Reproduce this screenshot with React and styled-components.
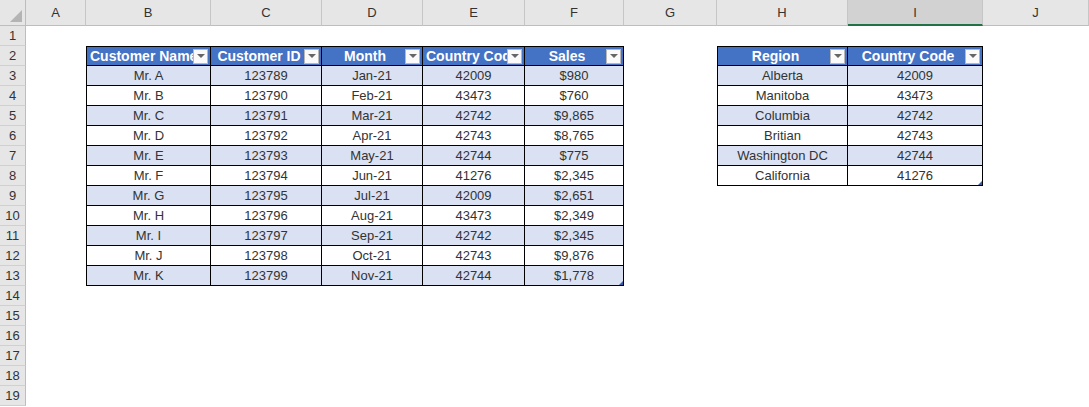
import React from "react";
import styled, { createGlobalStyle, css } from "styled-components";

const Global = createGlobalStyle`
  html, body { margin: 0; padding: 0; background: #fff; }
  body { font-family: "Liberation Sans", Arial, sans-serif; }
`;

const COLS = [26, 60, 125, 111, 101, 102, 99, 93, 131, 135, 106];
const LETTERS = ["A", "B", "C", "D", "E", "F", "G", "H", "I", "J"];

const Sheet = styled.div`
  display: grid;
  grid-template-columns: ${COLS.map((c) => c + "px").join(" ")};
  grid-template-rows: 26px repeat(19, 20px);
  width: 1089px;
  height: 407px;
  overflow: hidden;
  font-size: 13px;
  color: #333;
`;

const ColHead = styled.div`
  background: ${(p) => (p.$sel ? "#d2d2d2" : "#e6e6e6")};
  border-right: 1px solid #c6c6c6;
  border-bottom: ${(p) => (p.$sel ? "2px solid #217346" : "1px solid #bdbdbd")};
  display: flex;
  align-items: center;
  justify-content: center;
  font-size: 13px;
  color: #333;
  box-sizing: border-box;
`;

const Corner = styled.div`
  background: #e6e6e6;
  border-right: 1px solid #bdbdbd;
  border-bottom: 1px solid #bdbdbd;
  position: relative;
  &::after {
    content: "";
    position: absolute;
    right: 3px;
    bottom: 3px;
    border-left: 12px solid transparent;
    border-bottom: 12px solid #b4b4b4;
  }
`;

const RowHead = styled.div`
  background: #e6e6e6;
  border-right: 1px solid #bdbdbd;
  border-bottom: 1px solid #d0d0d0;
  display: flex;
  align-items: center;
  justify-content: center;
  font-size: 13px;
  color: #333;
  box-sizing: border-box;
`;

const Empty = styled.div``;

const Cell = styled.div`
  box-sizing: border-box;
  border-right: 1px solid #000;
  border-bottom: 1px solid #000;
  ${(p) => p.$first && css`border-left: 1px solid #000;`}
  background: ${(p) => (p.$band ? "#d9e1f2" : "#fff")};
  display: flex;
  align-items: center;
  justify-content: center;
  white-space: nowrap;
  position: relative;
  ${(p) =>
    p.$corner &&
    css`
      &::after {
        content: "";
        position: absolute;
        right: 0;
        bottom: 0;
        border-left: 4px solid transparent;
        border-bottom: 4px solid #3a5ba8;
      }
    `}
`;

const HeadCell = styled.div`
  box-sizing: border-box;
  background: #4472c4;
  color: #fff;
  font-weight: bold;
  font-size: 14px;
  border-top: 1px solid #000;
  border-right: 1px solid #000;
  border-bottom: 1px solid #000;
  ${(p) => p.$first && css`border-left: 1px solid #000;`}
  display: flex;
  align-items: center;
  padding-right: 2px;
  overflow: hidden;
`;

const HeadText = styled.div`
  flex: 1;
  min-width: 0;
  display: flex;
  justify-content: safe center;
  overflow: hidden;
  white-space: nowrap;
  padding-left: 3px;
`;

const Drop = styled.div`
  width: 15px;
  height: 15px;
  flex: none;
  background: #fafafa;
  border: 1px solid #b8b8b8;
  box-sizing: border-box;
  display: flex;
  align-items: center;
  justify-content: center;
  &::after {
    content: "";
    border-left: 4px solid transparent;
    border-right: 4px solid transparent;
    border-top: 4px solid #666;
  }
`;

const main = [
  ["Mr. A", "123789", "Jan-21", "42009", "$980"],
  ["Mr. B", "123790", "Feb-21", "43473", "$760"],
  ["Mr. C", "123791", "Mar-21", "42742", "$9,865"],
  ["Mr. D", "123792", "Apr-21", "42743", "$8,765"],
  ["Mr. E", "123793", "May-21", "42744", "$775"],
  ["Mr. F", "123794", "Jun-21", "41276", "$2,345"],
  ["Mr. G", "123795", "Jul-21", "42009", "$2,651"],
  ["Mr. H", "123796", "Aug-21", "43473", "$2,349"],
  ["Mr. I", "123797", "Sep-21", "42742", "$2,345"],
  ["Mr. J", "123798", "Oct-21", "42743", "$9,876"],
  ["Mr. K", "123799", "Nov-21", "42744", "$1,778"],
];
const mainHead = ["Customer Name", "Customer ID", "Month", "Country Code", "Sales"];
const region = [
  ["Alberta", "42009"],
  ["Manitoba", "43473"],
  ["Columbia", "42742"],
  ["Britian", "42743"],
  ["Washington DC", "42744"],
  ["California", "41276"],
];
const regionHead = ["Region", "Country Code"];

function rowCells(r) {
  const out = [];
  for (let c = 1; c <= 10; c++) {
    const key = `${r}-${c}`;
    if (c >= 2 && c <= 6 && r >= 2 && r <= 13) {
      const i = c - 2;
      if (r === 2) {
        out.push(
          <HeadCell key={key} $first={i === 0}>
            <HeadText>{mainHead[i]}</HeadText>
            <Drop />
          </HeadCell>
        );
      } else {
        out.push(
          <Cell key={key} $first={i === 0} $band={r % 2 === 1} $corner={r === 13 && i === 4}>
            {main[r - 3][i]}
          </Cell>
        );
      }
      continue;
    }
    if (c >= 8 && c <= 9 && r >= 2 && r <= 8) {
      const i = c - 8;
      if (r === 2) {
        out.push(
          <HeadCell key={key} $first={i === 0}>
            <HeadText>{regionHead[i]}</HeadText>
            <Drop />
          </HeadCell>
        );
      } else {
        out.push(
          <Cell key={key} $first={i === 0} $band={r % 2 === 1} $corner={r === 8 && i === 1}>
            {region[r - 3][i]}
          </Cell>
        );
      }
      continue;
    }
    out.push(<Empty key={key} />);
  }
  return out;
}

export default function App() {
  return (
    <>
      <Global />
      <Sheet>
        <Corner />
        {LETTERS.map((l) => (
          <ColHead key={l} $sel={l === "I"}>{l}</ColHead>
        ))}
        {Array.from({ length: 19 }, (_, k) => k + 1).map((r) => (
          <React.Fragment key={r}>
            <RowHead>{r}</RowHead>
            {rowCells(r)}
          </React.Fragment>
        ))}
      </Sheet>
    </>
  );
}
